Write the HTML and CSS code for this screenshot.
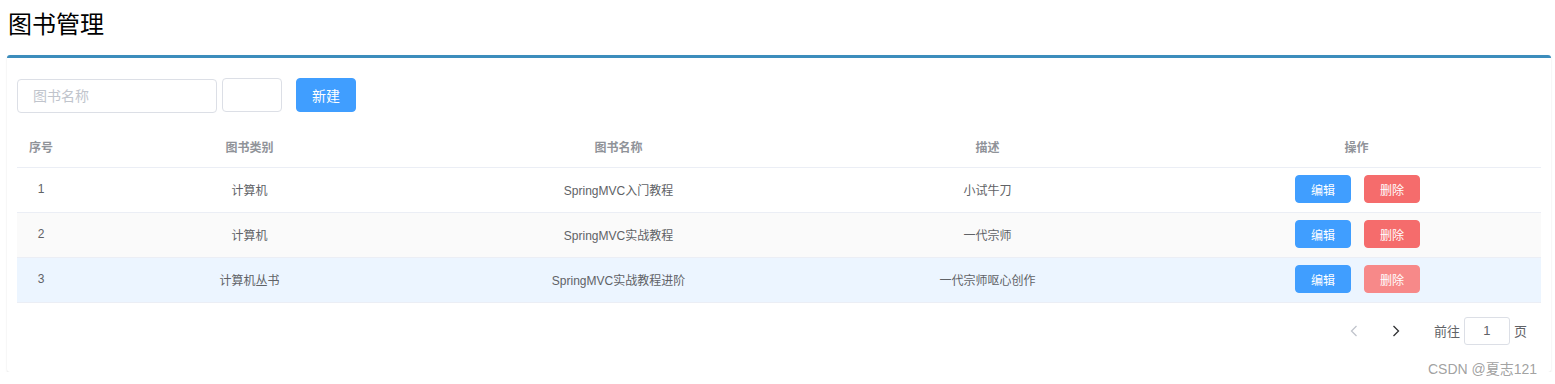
FILE: index.html
```html
<!DOCTYPE html>
<html lang="zh-CN">
<head>
    <meta charset="UTF-8">
    <title>图书管理</title>
    <link rel="stylesheet" href="styles.css">
</head>
<body>
    <h1 class="page-title">图书管理</h1>

    <div class="box">
        <div class="toolbar">
            <input type="text" class="input name-input" placeholder="图书名称">
            <input type="text" class="input small-input">
            <button class="btn btn-primary btn-new">新建</button>
        </div>

        <table class="book-table">
            <colgroup>
                <col style="width: 48px">
                <col><col><col><col>
            </colgroup>
            <thead>
                <tr>
                    <th>序号</th>
                    <th>图书类别</th>
                    <th>图书名称</th>
                    <th>描述</th>
                    <th>操作</th>
                </tr>
            </thead>
            <tbody>
                <tr>
                    <td>1</td>
                    <td>计算机</td>
                    <td>SpringMVC入门教程</td>
                    <td>小试牛刀</td>
                    <td><button class="btn btn-small btn-primary">编辑</button><button class="btn btn-small btn-danger">删除</button></td>
                </tr>
                <tr class="striped">
                    <td>2</td>
                    <td>计算机</td>
                    <td>SpringMVC实战教程</td>
                    <td>一代宗师</td>
                    <td><button class="btn btn-small btn-primary">编辑</button><button class="btn btn-small btn-danger">删除</button></td>
                </tr>
                <tr class="hover">
                    <td>3</td>
                    <td>计算机丛书</td>
                    <td>SpringMVC实战教程进阶</td>
                    <td>一代宗师呕心创作</td>
                    <td><button class="btn btn-small btn-primary">编辑</button><button class="btn btn-small btn-danger btn-hover">删除</button></td>
                </tr>
            </tbody>
        </table>

        <div class="pagination">
            <span class="page-btn disabled">
                <svg width="8" height="12" viewBox="0 0 8 12"><path d="M6.5 1 L1.5 6 L6.5 11" fill="none" stroke="currentColor" stroke-width="1.3"/></svg>
            </span>
            <span class="page-btn">
                <svg width="8" height="12" viewBox="0 0 8 12"><path d="M1.5 1 L6.5 6 L1.5 11" fill="none" stroke="currentColor" stroke-width="1.3"/></svg>
            </span>
            <span class="jump">前往<input type="text" class="jump-input" value="1">页</span>
        </div>
    </div>

    <div class="watermark">CSDN @夏志121</div>
</body>
</html>
```

FILE: styles.css
```css
* {
    box-sizing: border-box;
}

body {
    margin: 0;
    padding: 0 4px 0 7px;
    font-family: "Liberation Sans", "Noto Sans CJK SC", sans-serif;
    color: #606266;
    background: #fff;
}

.page-title {
    margin: 0;
    padding: 9px 0 0 1px;
    height: 55px;
    font-size: 24px;
    font-weight: normal;
    line-height: 32px;
    color: #000;
}

.box {
    background: #fff;
    border-top: 3px solid #3c8dbc;
    border-radius: 3px;
    box-shadow: 0 1px 2px rgba(0, 0, 0, 0.12);
    padding: 20px 10px 0 10px;
    height: 317px;
}

.toolbar {
    display: flex;
    align-items: flex-start;
    height: 50px;
}

.input {
    height: 34px;
    border: 1px solid #dcdfe6;
    border-radius: 4px;
    padding: 0 15px;
    font-size: 14px;
    font-family: inherit;
    color: #606266;
    outline: none;
}

.input::placeholder {
    color: #c0c4cc;
}

.name-input {
    width: 200px;
    margin-top: 1px;
}

.small-input {
    width: 60px;
    margin-left: 5px;
}

.btn {
    border: 1px solid transparent;
    border-radius: 4px;
    color: #fff;
    font-family: inherit;
    cursor: pointer;
}

.btn-new {
    width: 60px;
    height: 34px;
    margin-left: 14px;
    font-size: 14px;
}

.btn-primary {
    background: #409eff;
    border-color: #409eff;
}

.btn-danger {
    background: #f56c6c;
    border-color: #f56c6c;
}

.btn-danger.btn-hover {
    background: #f78989;
    border-color: #f78989;
}

.btn-small {
    width: 56px;
    height: 28px;
    font-size: 12px;
    padding: 0;
}

.btn-small + .btn-small {
    margin-left: 13px;
}

.book-table {
    width: 100%;
    border-collapse: collapse;
    table-layout: fixed;
    font-size: 12px;
}

.book-table th,
.book-table td {
    text-align: center;
    border-bottom: 1px solid #ebeef5;
    padding: 0;
}

.book-table th {
    height: 39px;
    color: #909399;
    font-weight: bold;
    padding-bottom: 1px;
}

.book-table td {
    height: 45px;
    color: #606266;
    padding-bottom: 1px;
}

.book-table td:last-child {
    padding-left: 2px;
}

.book-table tr.striped td {
    background: #fafafa;
}

.book-table tr.hover td {
    background: #ecf5ff;
}

.pagination {
    display: flex;
    justify-content: flex-end;
    align-items: center;
    height: 58px;
    padding-right: 14px;
    padding-bottom: 2px;
    font-size: 13px;
    color: #606266;
}

.page-btn {
    width: 42px;
    display: flex;
    justify-content: center;
    color: #303133;
}

.page-btn.disabled {
    color: #c0c4cc;
}

.jump {
    display: flex;
    align-items: center;
    margin-left: 17px;
}

.jump-input {
    width: 46px;
    height: 28px;
    margin: 0 4px;
    border: 1px solid #dcdfe6;
    border-radius: 3px;
    text-align: center;
    font-size: 13px;
    font-family: inherit;
    color: #606266;
}

.watermark {
    position: absolute;
    left: 1428px;
    top: 358px;
    font-size: 14px;
    color: rgba(150, 150, 150, 0.9);
    font-family: "Liberation Sans", "Noto Sans CJK SC", sans-serif;
}
```
